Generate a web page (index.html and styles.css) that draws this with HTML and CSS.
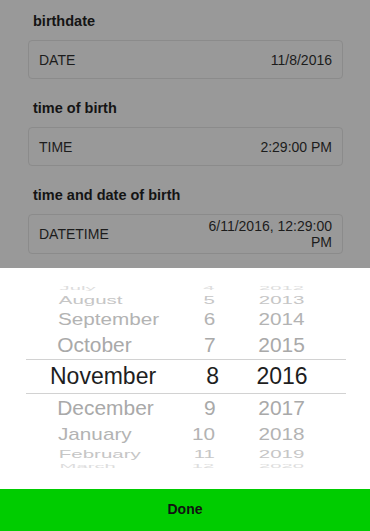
FILE: index.html
```html
<!DOCTYPE html>
<html lang="en">
<head>
<meta charset="utf-8">
<title>Date pickers</title>
<link rel="stylesheet" href="styles.css">
</head>
<body>
<div class="form">
  <div class="field">
    <div class="label">birthdate</div>
    <div class="box"><span class="key">DATE</span><span class="val">11/8/2016</span></div>
  </div>
  <div class="field">
    <div class="label">time of birth</div>
    <div class="box"><span class="key">TIME</span><span class="val">2:29:00 PM</span></div>
  </div>
  <div class="field">
    <div class="label">time and date of birth</div>
    <div class="box"><span class="key">DATETIME</span><span class="val wrap">6/11/2016, 12:29:00 PM</span></div>
  </div>
</div>
<div class="picker">
  <div class="wheel">
    <div class="row r4"><span class="m"><span>July</span></span><span class="d"><span>4</span></span><span class="y"><span>2012</span></span></div>
    <div class="row r3"><span class="m"><span>August</span></span><span class="d"><span>5</span></span><span class="y"><span>2013</span></span></div>
    <div class="row r2"><span class="m"><span>September</span></span><span class="d"><span>6</span></span><span class="y"><span>2014</span></span></div>
    <div class="row r1"><span class="m"><span>October</span></span><span class="d"><span>7</span></span><span class="y"><span>2015</span></span></div>
    <div class="row sel"><span class="m"><span>November</span></span><span class="d"><span>8</span></span><span class="y"><span>2016</span></span></div>
    <div class="row b1"><span class="m"><span>December</span></span><span class="d"><span>9</span></span><span class="y"><span>2017</span></span></div>
    <div class="row b2"><span class="m"><span>January</span></span><span class="d"><span>10</span></span><span class="y"><span>2018</span></span></div>
    <div class="row b3"><span class="m"><span>February</span></span><span class="d"><span>11</span></span><span class="y"><span>2019</span></span></div>
    <div class="row b4"><span class="m"><span>March</span></span><span class="d"><span>12</span></span><span class="y"><span>2020</span></span></div>
  </div>
</div>
<div class="done">Done</div>
</body>
</html>
```

FILE: styles.css
```css
html, body {
  margin: 0;
  padding: 0;
  background: #ffffff;
  font-family: "Liberation Sans", Arial, sans-serif;
}

.form {
  height: 268px;
  box-sizing: border-box;
  background: #999999;
  padding: 12px 27px 0 28px;
  display: flex;
  flex-direction: column;
  gap: 20px;
}

.field {
  display: flex;
  flex-direction: column;
  gap: 10px;
}

.label {
  margin-left: 5px;
  font-size: 14.5px;
  line-height: 18px;
  font-weight: bold;
  color: #141414;
}

.box {
  min-height: 39px;
  box-sizing: border-box;
  border: 1px solid #8b8b8b;
  border-radius: 4px;
  padding: 3px 10px;
  display: flex;
  justify-content: space-between;
  align-items: center;
  font-size: 14px;
  line-height: 16px;
  color: #1c1c1c;
}

.val {
  text-align: right;
}

.val.wrap {
  max-width: 135px;
}

.picker {
  height: 221px;
  box-sizing: border-box;
  padding-top: 16px;
  background: #ffffff;
}

.wheel {
  height: 184px;
  margin: 0 24px 0 26px;
  overflow: hidden;
}

.row {
  display: grid;
  grid-template-columns: 130px 39px 100px;
  grid-template-rows: 100%;
  align-items: center;
  padding-left: 24px;
  box-sizing: border-box;
  font-size: 23px;
  line-height: 23px;
  color: var(--c);
}

.row .m, .row .d, .row .y {
  display: flex;
  align-items: center;
  height: 100%;
  white-space: nowrap;
}

.row .m > span,
.row .d > span,
.row .y > span {
  display: inline-block;
  transform: scale(var(--sx), var(--sy));
}

.row .m { justify-content: flex-start; }
.row .m > span { transform-origin: 80px 50%; }

.row .d { justify-content: flex-end; }
.row .d > span { transform-origin: calc(100% - 36px) 50%; }

.row .y { justify-content: center; padding-left: 26px; }
.row .y > span { transform-origin: 50% 50%; }

.r4 { height: 9px;  --sx: 0.88; --sy: 0.2;  --c: #dddddd; }
.r3 { height: 14px; --sx: 0.89; --sy: 0.46; --c: #c6c6c6; }
.r2 { height: 25px; --sx: 0.90; --sy: 0.72; --c: #b3b3b3; }
.r1 { height: 27px; --sx: 0.91; --sy: 0.85; --c: #a9a9a9; }
.sel {
  height: 35px;
  --sx: 1; --sy: 1; --c: #1e1e1e;
  border-top: 1px solid #d2d2d2;
  border-bottom: 1px solid #d2d2d2;
}
.b1 { height: 28px; --sx: 0.91; --sy: 0.87; --c: #a9a9a9; }
.b2 { height: 25px; --sx: 0.90; --sy: 0.70; --c: #b3b3b3; }
.b3 { height: 14px; --sx: 0.89; --sy: 0.48; --c: #c6c6c6; }
.b4 { height: 10px; --sx: 0.88; --sy: 0.2;  --c: #dddddd; }

.done {
  height: 42px;
  box-sizing: border-box;
  padding-bottom: 2px;
  background: #00cc00;
  display: flex;
  align-items: center;
  justify-content: center;
  font-size: 14px;
  font-weight: bold;
  color: #111111;
}
```
